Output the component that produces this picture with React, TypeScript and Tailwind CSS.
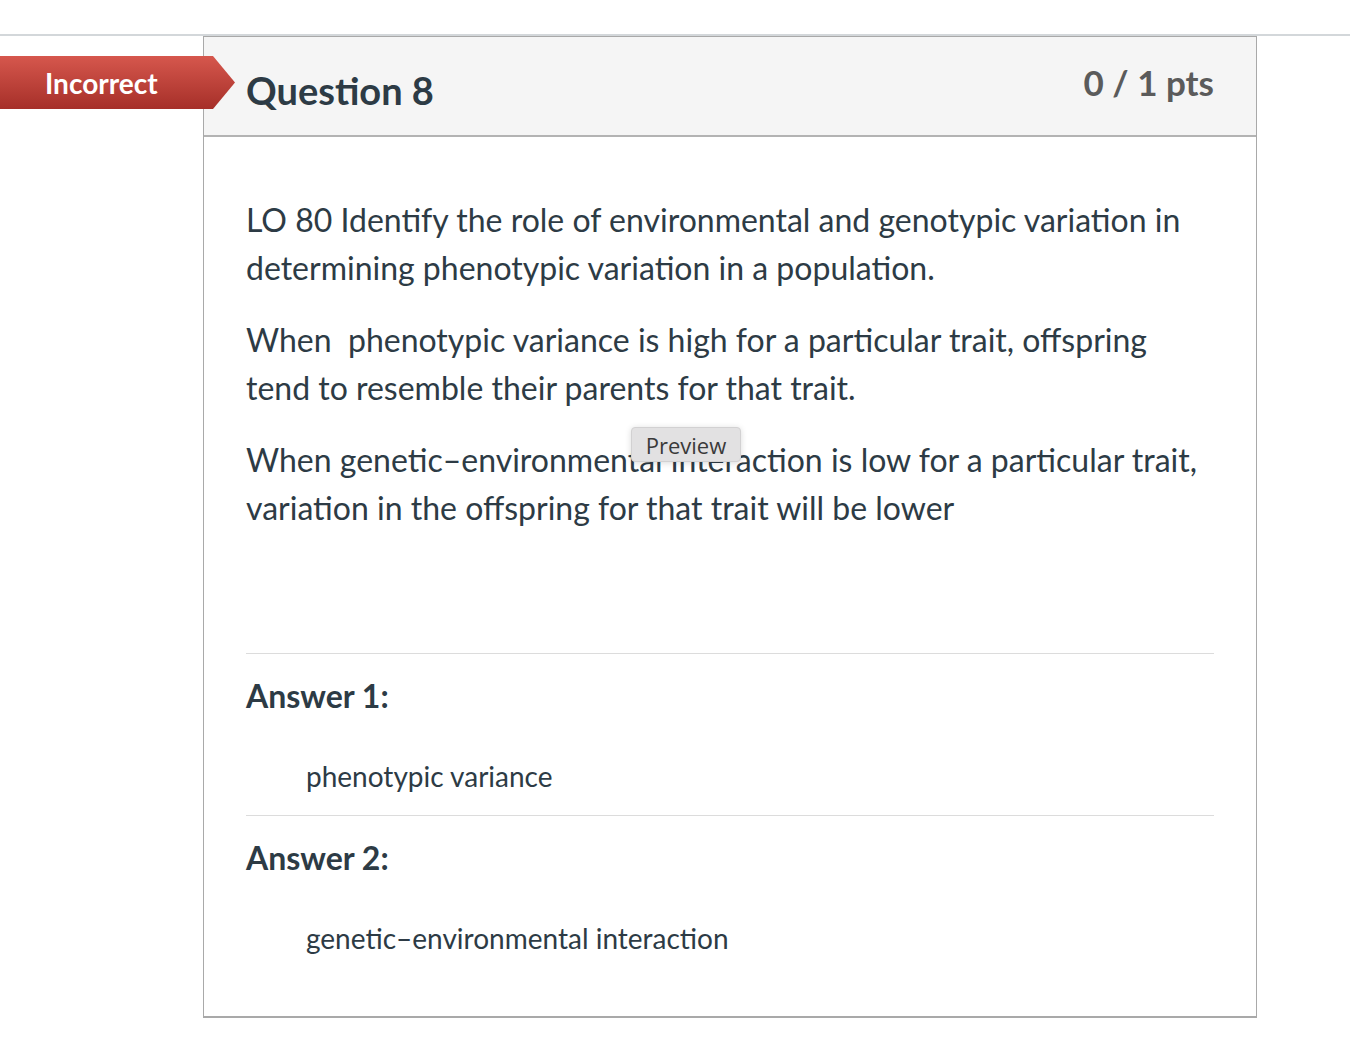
import React from "react";

const lato = "font-['Lato','Liberation_Sans',sans-serif]";

function Answer({ label, value, last }: { label: string; value: string; last?: boolean }) {
  return (
    <div className={`border-t border-[#dcdcdc] pt-[24px] ${last ? "pb-[60px]" : "pb-[21px]"}`}>
      <h3 className="text-[32px] font-bold leading-[36px] text-[#2d3b45]">{label}</h3>
      <p className="mt-[44px] pl-[60px] text-[28px] leading-[36px] text-[#2d3b45]">{value}</p>
    </div>
  );
}

export default function App() {
  return (
    <div className={`relative min-h-[1052px] w-[1350px] bg-white ${lato}`}>
      <div className="h-[34px]" />
      <div className="h-[2px] w-full bg-[#d3d7da]" />

      {/* Incorrect banner */}
      <div className="absolute left-0 top-[56px] flex h-[53px] w-[235px] items-center bg-gradient-to-b from-[#d6574d] to-[#a62f29] pl-[45px] [clip-path:polygon(0_0,213px_0,235px_50%,213px_100%,0_100%)]">
        <span className="text-[28px] font-bold leading-none text-white">Incorrect</span>
      </div>

      <div className="ml-[203px] w-[1054px] border border-b-2 border-[#a9a9a9]">
        <div className="flex h-[100px] items-start justify-between border-b-2 border-[#b3b3b3] bg-[#f5f5f5] pl-[42px] pr-[42px]">
          <h2 className="mt-[32px] text-[38px] font-bold leading-[42px] text-[#2d3b45]">Question 8</h2>
          <span className="mt-[24px] text-[35px] font-bold leading-[42px] text-[#5b5b5b]">0 / 1 pts</span>
        </div>

        <div className="px-[42px] pt-[59px] text-[#2d3b45]">
          <div className="text-[32px] leading-[48px]">
            <p className="mb-[24px]">
              LO 80 Identify the role of environmental and genotypic variation in determining phenotypic variation in a
              population.
            </p>
            <p className="mb-[24px]">
              When&nbsp; phenotypic variance is high for a particular trait, offspring tend to resemble their parents for that
              trait.
            </p>
            <p>
              When genetic–environmental interaction is low for a particular trait, variation in the offspring for that trait
              will be lower
            </p>
          </div>

          <div className="mt-[121px]">
            <Answer label="Answer 1:" value="phenotypic variance" />
            <Answer label="Answer 2:" value="genetic–environmental interaction" last />
          </div>
        </div>
      </div>

      {/* Preview tooltip */}
      <div className="absolute left-[631px] top-[427px] flex h-[35px] w-[110px] items-center justify-center rounded-[4px] border border-[#d2d1d2] bg-[#e2e1e2] shadow-[0_1px_6px_rgba(0,0,0,0.15)]">
        <span className="font-['Open_Sans',sans-serif] text-[22px] leading-none text-[#3a3a3a]">Preview</span>
      </div>
    </div>
  );
}
